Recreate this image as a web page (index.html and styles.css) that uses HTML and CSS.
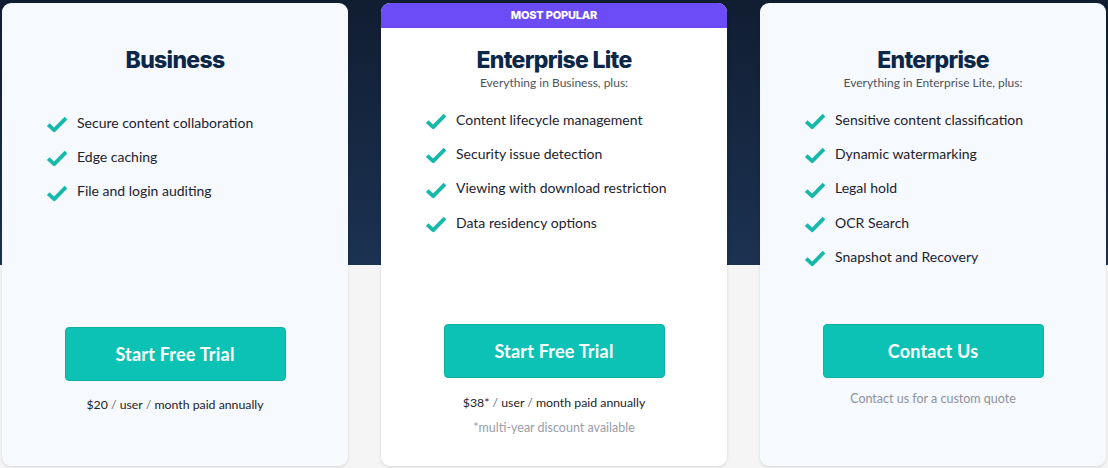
FILE: index.html
```html
<!DOCTYPE html>
<html lang="en">
<head>
<meta charset="utf-8">
<title>Pricing</title>
<link rel="stylesheet" href="styles.css">
</head>
<body>
<svg width="0" height="0" class="defs" aria-hidden="true">
  <symbol id="check" viewBox="0 0 22 18">
    <path d="M2.2 9.6 L8.2 15.2 L20 3.2" fill="none" stroke="currentColor" stroke-width="3.8" stroke-linejoin="round"/>
  </symbol>
</svg>
<main class="pricing">
  <section class="card card--business">
    <div class="card-body">
      <h2 class="plan-name">Business</h2>
      <ul class="features features--spaced">
        <li><svg class="check"><use href="#check"/></svg>Secure content collaboration</li>
        <li><svg class="check"><use href="#check"/></svg>Edge caching</li>
        <li><svg class="check"><use href="#check"/></svg>File and login auditing</li>
      </ul>
    </div>
    <div class="card-foot card-foot--low">
      <a class="cta" href="#">Start Free Trial</a>
      <p class="price">$20 <span class="sep">/</span> user <span class="sep">/</span> month paid annually</p>
    </div>
  </section>

  <section class="card card--popular">
    <div class="badge">MOST POPULAR</div>
    <div class="card-body card-body--popular">
      <h2 class="plan-name">Enterprise Lite</h2>
      <p class="plan-sub">Everything in Business, plus:</p>
      <ul class="features">
        <li><svg class="check"><use href="#check"/></svg>Content lifecycle management</li>
        <li><svg class="check"><use href="#check"/></svg>Security issue detection</li>
        <li><svg class="check"><use href="#check"/></svg>Viewing with download restriction</li>
        <li><svg class="check"><use href="#check"/></svg>Data residency options</li>
      </ul>
    </div>
    <div class="card-foot">
      <a class="cta" href="#">Start Free Trial</a>
      <p class="price price--tight">$38* <span class="sep">/</span> user <span class="sep">/</span> month paid annually</p>
      <p class="footnote">*multi-year discount available</p>
    </div>
  </section>

  <section class="card card--enterprise">
    <div class="card-body">
      <h2 class="plan-name">Enterprise</h2>
      <p class="plan-sub">Everything in Enterprise Lite, plus:</p>
      <ul class="features">
        <li><svg class="check"><use href="#check"/></svg>Sensitive content classification</li>
        <li><svg class="check"><use href="#check"/></svg>Dynamic watermarking</li>
        <li><svg class="check"><use href="#check"/></svg>Legal hold</li>
        <li><svg class="check"><use href="#check"/></svg>OCR Search</li>
        <li><svg class="check"><use href="#check"/></svg>Snapshot and Recovery</li>
      </ul>
    </div>
    <div class="card-foot">
      <a class="cta" href="#">Contact Us</a>
      <p class="quote">Contact us for a custom quote</p>
    </div>
  </section>
</main>
</body>
</html>
```

FILE: styles.css
```css
* { box-sizing: border-box; }

html, body {
  margin: 0;
  padding: 0;
}

body {
  width: 1108px;
  height: 468px;
  overflow: hidden;
  font-family: "Lato", "Noto Sans", sans-serif;
  background: linear-gradient(180deg, #111d31 0px, #1b3252 265px, #f5f5f5 265px, #f5f5f5 100%);
}

.defs {
  position: absolute;
  width: 0;
  height: 0;
}

.pricing {
  display: flex;
  gap: 33px;
  padding: 3px 2px 2px 2px;
  height: 468px;
}

.card {
  width: 346px;
  height: 463px;
  border-radius: 9px;
  background: #f6f9fd;
  box-shadow: 0 1px 3px rgba(20, 30, 50, 0.14);
  display: flex;
  flex-direction: column;
  overflow: hidden;
}

.card--popular {
  background: #ffffff;
}

.badge {
  height: 25px;
  background: #6b4cf6;
  color: #ffffff;
  font-family: "Inter", "Lato", sans-serif;
  font-weight: 800;
  font-size: 11px;
  letter-spacing: -0.2px;
  line-height: 25px;
  text-align: center;
}

.card-body {
  padding: 42px 0 0 44px;
  height: 321px;
}

.card-body--popular {
  padding-top: 17px;
  height: 296px;
}

.plan-name {
  margin: 0 0 0 -44px;
  font-family: "Inter", "Lato", sans-serif;
  font-weight: 800;
  font-size: 23px;
  letter-spacing: -0.7px;
  line-height: 30px;
  color: #0c2747;
  text-align: center;
}

.plan-sub {
  margin: -1px 0 0 -44px;
  font-size: 12px;
  line-height: 18px;
  color: #4e535c;
  text-align: center;
}

.features {
  list-style: none;
  margin: 10px 0 0 0;
  padding: 0;
}

.features--spaced {
  margin-top: 30px;
}

.features li {
  display: flex;
  align-items: center;
  gap: 9px;
  height: 34.3px;
  font-size: 14px;
  color: #1d2230;
}

.check {
  width: 22px;
  height: 18px;
  flex: none;
  color: #17b8a9;
  margin-top: 4px;
}

.card-foot {
  display: flex;
  flex-direction: column;
  align-items: center;
}

.card-foot--low {
  padding-top: 3px;
}

.cta {
  display: flex;
  align-items: center;
  justify-content: center;
  width: 221px;
  height: 54px;
  border-radius: 4px;
  background: #0cc2b4;
  border: 1px solid #0db0a3;
  color: #ffffff;
  font-size: 18px;
  font-weight: 700;
  text-decoration: none;
  letter-spacing: 0.2px;
}

.price {
  margin: 15px 0 0;
  font-size: 12.3px;
  line-height: 18px;
  color: #1f222a;
}

.price--tight {
  margin-top: 16px;
}

.sep {
  color: #6a6e78;
}

.footnote {
  margin: 7px 0 0;
  font-size: 12.5px;
  line-height: 18px;
  color: #9a9da7;
}

.quote {
  margin: 12px 0 0;
  font-size: 12.5px;
  line-height: 18px;
  color: #8e929c;
}
```
